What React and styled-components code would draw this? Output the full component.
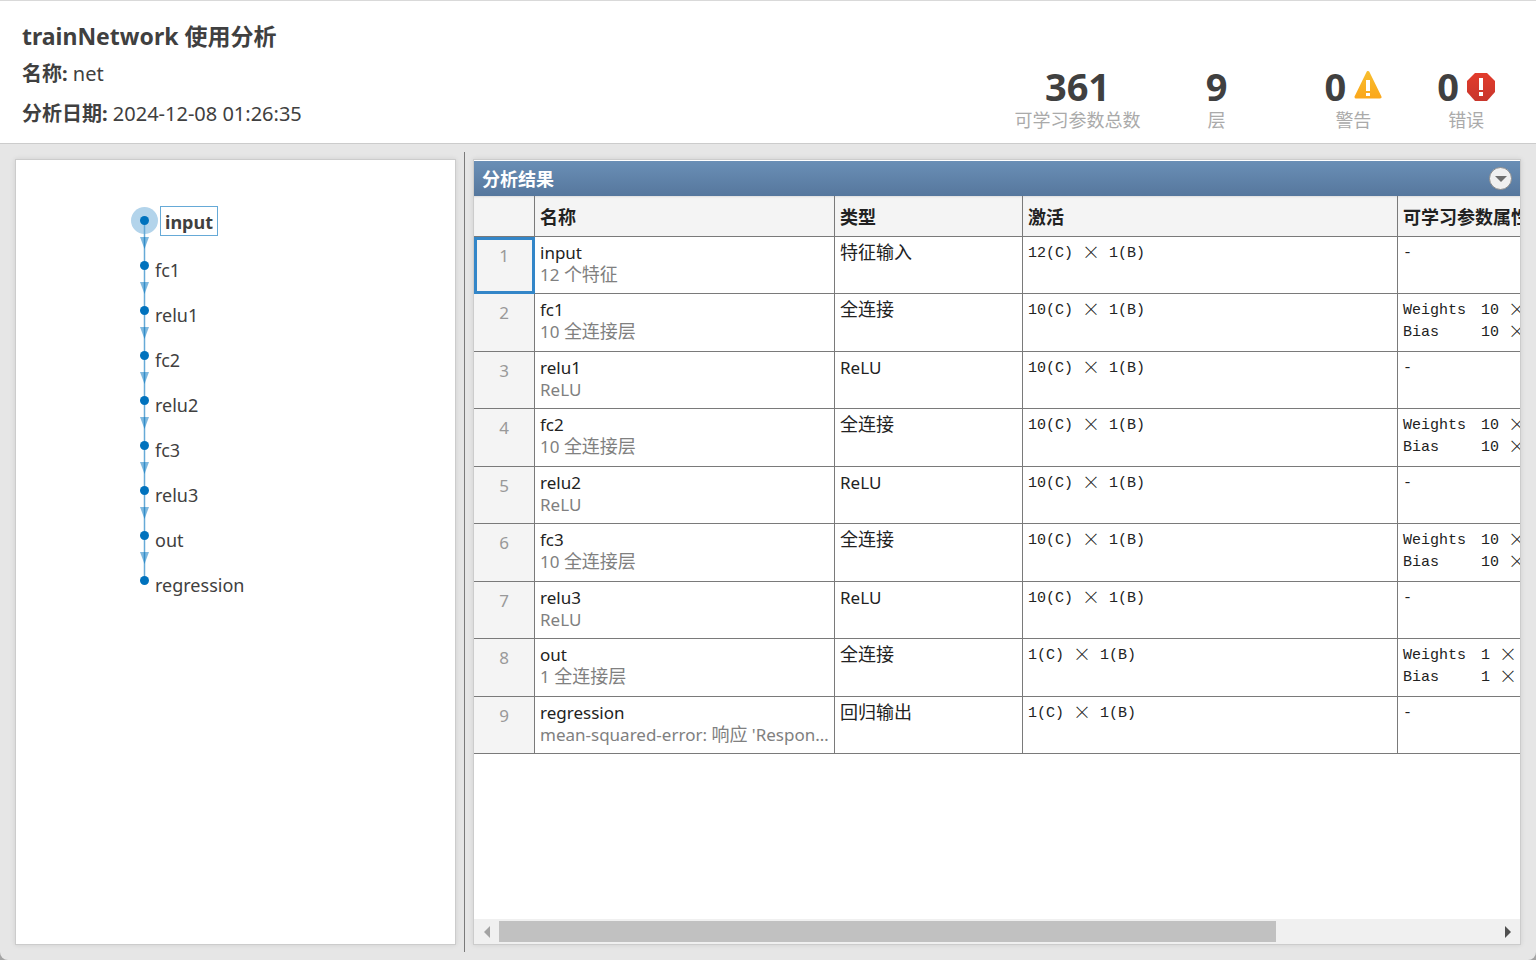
import React from 'react';
import styled, { createGlobalStyle } from 'styled-components';

const GlobalStyle = createGlobalStyle`
  * {
    box-sizing: border-box;
  }
  body {
    margin: 0;
    background-color: #a4a4a4;
    color: #404040;
    font-family: 'Noto Sans', 'Noto Sans CJK SC', sans-serif;
  }
`;

const Page = styled.div`
  display: flex;
  flex-direction: column;
  height: 100vh;
  background-color: #e6e6e6;
  border-radius: 0 0 8px 8px;
  overflow: hidden;
`;

// header
const Header = styled.header`
  display: flex;
  justify-content: space-between;
  align-items: flex-end;
  height: 144px;
  padding: 0 41px 9px 22px;
  background-color: #fff;
  border-top: 1px solid #d9d9d9;
  border-bottom: 1px solid #cccccc;
`;

const Title = styled.h1`
  margin: 0;
  font-size: 23px;
  line-height: 36px;
`;

const MetaLine = styled.p`
  margin: 0;
  font-size: 20px;
  line-height: 40px;
`;

const Stats = styled.div`
  display: flex;
  gap: 55px;
`;

const Stat = styled.div`
  display: flex;
  flex-direction: column;
  align-items: center;
  min-width: 42px;
  margin-right: ${(props) => (props.$last ? '32px' : '0')};
`;

const StatValue = styled.div`
  display: flex;
  align-items: center;
  gap: 8px;
  font-size: 38px;
  font-weight: bold;
  line-height: 40px;
`;

const StatLabel = styled.div`
  font-size: 18px;
  line-height: 28px;
  color: #aaaaaa;
`;

// panels
const Body = styled.main`
  flex: 1;
  display: flex;
  min-height: 0;
  padding: 8px 15px;
`;

const GraphPanel = styled.section`
  flex: 0 0 441px;
  margin: 7px 0;
  padding: 46px 0 0 115px;
  background-color: #fff;
  border: 1px solid #cccccc;
  box-shadow: 0 0 5px rgba(0, 0, 0, 0.1);
`;

const Splitter = styled.div`
  width: 1px;
  margin: 0 8px;
  background-color: #7a7a7a;
`;

const ResultPanel = styled.section`
  flex: 1;
  display: flex;
  flex-direction: column;
  min-width: 0;
  margin: 7px 0;
  background-color: #fff;
  border: 1px solid #cccccc;
  box-shadow: 0 0 5px rgba(0, 0, 0, 0.1);
`;

// layer graph
const LayerList = styled.ul`
  margin: 0;
  padding: 0;
  list-style: none;
`;

const LayerItem = styled.li`
  display: flex;
  align-items: flex-start;
  height: 45px;
`;

const Marker = styled.svg`
  display: block;
  width: 24px;
  height: 45px;
  overflow: visible;
`;

const LayerLabel = styled.span`
  height: 30px;
  margin: ${(props) => (props.$selected ? '0 0 0 5px' : '4px 0 0')};
  padding: ${(props) => (props.$selected ? '0 4px' : '0')};
  border: ${(props) => (props.$selected ? '1px solid #66aad7' : 'none')};
  font-size: 18px;
  font-weight: ${(props) => (props.$selected ? 'bold' : 'normal')};
  line-height: 30px;
`;

// result table
const ResultTitle = styled.div`
  display: flex;
  align-items: center;
  justify-content: space-between;
  height: 35px;
  margin-top: 1px;
  padding: 0 8px;
  background: linear-gradient(#6a8fb6, #56779d);
  color: #fff;
`;

const ResultHeading = styled.h2`
  margin: 0;
  font-size: 18px;
  line-height: 24px;
`;

const MenuButton = styled.button`
  display: flex;
  align-items: center;
  justify-content: center;
  width: 23px;
  height: 23px;
  padding: 0;
  border: 1px solid #8c8c8c;
  border-radius: 50%;
  background-color: #f0f0f0;
  cursor: pointer;
`;

const TableArea = styled.div`
  flex: 1;
  min-height: 0;
  overflow: hidden;
`;

const Table = styled.table`
  width: 1344px;
  table-layout: fixed;
  border-collapse: separate;
  border-spacing: 0;
  color: #222222;
  font-size: 17px;
  line-height: 22px;
`;

const Col = styled.col`
  width: ${(props) => props.$width}px;
`;

const HeadCell = styled.th`
  height: 41px;
  padding: 1px 5px 0;
  border-right: 1px solid #7a7a7a;
  border-bottom: 1px solid #7a7a7a;
  background-color: #f4f4f4;
  box-shadow: inset 0 2px 2px -1px #dddddd;
  font-size: 18px;
  text-align: left;
`;

const Row = styled.tr`
  height: 57px;

  &:nth-child(even) {
    height: 58px;
  }
`;

const Cell = styled.td`
  padding: 5px 5px 0;
  border-right: 1px solid #7a7a7a;
  border-bottom: 1px solid #7a7a7a;
  vertical-align: top;
  white-space: nowrap;
`;

const IndexCell = styled(Cell)`
  padding-top: 8px;
  background-color: #f4f4f4;
  color: #999999;
  text-align: center;
  outline: ${(props) => (props.$selected ? '3px solid #3386c8' : 'none')};
  outline-offset: -3px;
`;

const MonoCell = styled(Cell)`
  padding-top: 6px;
  font-family: 'Liberation Mono', 'Noto Sans CJK SC', monospace;
  font-size: 15px;
`;

const CellLine = styled.div`
  height: 22px;
`;

const Description = styled(CellLine)`
  overflow: hidden;
  text-overflow: ellipsis;
  color: #808080;
`;

const Zh = styled.span`
  font-size: 18px;
  line-height: 18px;
`;

const Times = styled.span`
  font-family: 'Noto Sans CJK SC', sans-serif;
  font-size: 18px;
  font-weight: 300;
  line-height: 1px;
  vertical-align: -2px;
`;

const Params = styled.div`
  display: grid;
  grid-template-columns: max-content max-content;
  grid-auto-rows: 22px;
  column-gap: 15px;
`;

// horizontal scrollbar
const ScrollBar = styled.div`
  display: flex;
  height: 25px;
  padding: 2px 0;
  background-color: #f0f0f0;
`;

const ScrollButton = styled.button`
  display: flex;
  align-items: center;
  justify-content: center;
  width: 25px;
  padding: 0;
  border: none;
  background: none;
`;

const ScrollTrack = styled.div`
  flex: 1;
`;

const ScrollThumb = styled.div`
  width: 78%;
  height: 100%;
  background-color: #c1c1c1;
`;

const layers = [
  { name: 'input', desc: ['12 ', '个特征'], type: '特征输入', size: ['12(C)', '1(B)'] },
  { name: 'fc1', desc: ['10 ', '全连接层'], type: '全连接', size: ['10(C)', '1(B)'], params: [['10', '12'], ['10', '1']] },
  { name: 'relu1', desc: ['ReLU'], type: 'ReLU', size: ['10(C)', '1(B)'] },
  { name: 'fc2', desc: ['10 ', '全连接层'], type: '全连接', size: ['10(C)', '1(B)'], params: [['10', '10'], ['10', '1']] },
  { name: 'relu2', desc: ['ReLU'], type: 'ReLU', size: ['10(C)', '1(B)'] },
  { name: 'fc3', desc: ['10 ', '全连接层'], type: '全连接', size: ['10(C)', '1(B)'], params: [['10', '10'], ['10', '1']] },
  { name: 'relu3', desc: ['ReLU'], type: 'ReLU', size: ['10(C)', '1(B)'] },
  { name: 'out', desc: ['1 ', '全连接层'], type: '全连接', size: ['1(C)', '1(B)'], params: [['1', '10'], ['1', '1']] },
  {
    name: 'regression',
    desc: ['mean-squared-error: ', '响应', " 'Response'"],
    type: '回归输出',
    size: ['1(C)', '1(B)'],
  },
];

const WarningIcon = () => (
  <svg width="28" height="30" viewBox="0 0 28 30">
    <defs>
      <linearGradient id="warn" x1="0" y1="0" x2="0" y2="1">
        <stop offset="0" stopColor="#f7bd2e" />
        <stop offset="1" stopColor="#fba81c" />
      </linearGradient>
    </defs>
    <path d="M14 1.5 L26 26 H2 Z" fill="url(#warn)" stroke="url(#warn)" strokeWidth="3" strokeLinejoin="round" />
    <rect x="12" y="9" width="4" height="11" fill="#fff" />
    <rect x="12" y="22" width="4" height="3" fill="#fff" />
  </svg>
);

const ErrorIcon = () => (
  <svg width="28" height="30" viewBox="0 0 28 30">
    <defs>
      <linearGradient id="err" x1="0" y1="0" x2="0" y2="1">
        <stop offset="0" stopColor="#e23c2c" />
        <stop offset="1" stopColor="#c8362c" />
      </linearGradient>
    </defs>
    <path d="M8 2 H20 L28 10 V21 L20 30 H8 L0 21 V10 Z" fill="url(#err)" />
    <rect x="12" y="7" width="4" height="12" fill="#fff" />
    <rect x="12" y="21" width="4" height="4" fill="#fff" />
  </svg>
);

const Size = ({ left, right }) => (
  <span>
    {left} <Times>×</Times> {right}
  </span>
);

const LayerNode = ({ selected, last }) => (
  <Marker>
    {selected && <circle cx="13.5" cy="14.5" r="13.5" fill="#b3d4eb" />}
    {!last && <path d="M13.5 15 V60" stroke="#66aad7" strokeWidth="1.5" />}
    {!last && <path d="M9 31 H18 L13.5 43 Z" fill="#0072bd" fillOpacity="0.5" />}
    <circle cx="13.5" cy="14.5" r="4.5" fill="#0072bd" />
  </Marker>
);

const App = () => {
  return (
    <>
      <GlobalStyle />
      <Page>
        <Header>
          <div>
            <Title>trainNetwork 使用分析</Title>
            <MetaLine>
              <b>名称:</b> net
            </MetaLine>
            <MetaLine>
              <b>分析日期:</b> 2024-12-08 01:26:35
            </MetaLine>
          </div>
          <Stats>
            <Stat>
              <StatValue>361</StatValue>
              <StatLabel>可学习参数总数</StatLabel>
            </Stat>
            <Stat $last>
              <StatValue>9</StatValue>
              <StatLabel>层</StatLabel>
            </Stat>
            <Stat>
              <StatValue>
                0 <WarningIcon />
              </StatValue>
              <StatLabel>警告</StatLabel>
            </Stat>
            <Stat>
              <StatValue>
                0 <ErrorIcon />
              </StatValue>
              <StatLabel>错误</StatLabel>
            </Stat>
          </Stats>
        </Header>

        <Body>
          <GraphPanel>
            <LayerList>
              {layers.map((layer, i) => (
                <LayerItem key={layer.name}>
                  <LayerNode selected={i === 0} last={i === layers.length - 1} />
                  <LayerLabel $selected={i === 0}>{layer.name}</LayerLabel>
                </LayerItem>
              ))}
            </LayerList>
          </GraphPanel>

          <Splitter />

          <ResultPanel>
            <ResultTitle>
              <ResultHeading>分析结果</ResultHeading>
              <MenuButton aria-label="菜单">
                <svg width="12" height="6" viewBox="0 0 12 6">
                  <path d="M0 0 H12 L6 6 Z" fill="#6e6e6e" />
                </svg>
              </MenuButton>
            </ResultTitle>
            <TableArea>
              <Table>
                <colgroup>
                  <Col $width={61} />
                  <Col $width={300} />
                  <Col $width={188} />
                  <Col $width={375} />
                  <Col $width={420} />
                </colgroup>
                <thead>
                  <tr>
                    <HeadCell />
                    <HeadCell>名称</HeadCell>
                    <HeadCell>类型</HeadCell>
                    <HeadCell>激活</HeadCell>
                    <HeadCell>可学习参数属性</HeadCell>
                  </tr>
                </thead>
                <tbody>
                  {layers.map((layer, i) => (
                    <Row key={layer.name}>
                      <IndexCell $selected={i === 0}>{i + 1}</IndexCell>
                      <Cell>
                        <CellLine>{layer.name}</CellLine>
                        <Description>
                          {layer.desc[0]}
                          <Zh>{layer.desc[1]}</Zh>
                          {layer.desc[2]}
                        </Description>
                      </Cell>
                      <Cell>
                        <CellLine>{layer.type === 'ReLU' ? layer.type : <Zh>{layer.type}</Zh>}</CellLine>
                      </Cell>
                      <MonoCell>
                        <CellLine>
                          <Size left={layer.size[0]} right={layer.size[1]} />
                        </CellLine>
                      </MonoCell>
                      <MonoCell>
                        {layer.params ? (
                          <Params>
                            <span>Weights</span>
                            <Size left={layer.params[0][0]} right={layer.params[0][1]} />
                            <span>Bias</span>
                            <Size left={layer.params[1][0]} right={layer.params[1][1]} />
                          </Params>
                        ) : (
                          '-'
                        )}
                      </MonoCell>
                    </Row>
                  ))}
                </tbody>
              </Table>
            </TableArea>
            <ScrollBar>
              <ScrollButton aria-label="向左滚动">
                <svg width="6" height="12" viewBox="0 0 6 12">
                  <path d="M6 0 V12 L0 6 Z" fill="#a3a3a3" />
                </svg>
              </ScrollButton>
              <ScrollTrack>
                <ScrollThumb />
              </ScrollTrack>
              <ScrollButton aria-label="向右滚动">
                <svg width="6" height="12" viewBox="0 0 6 12">
                  <path d="M0 0 V12 L6 6 Z" fill="#505050" />
                </svg>
              </ScrollButton>
            </ScrollBar>
          </ResultPanel>
        </Body>
      </Page>
    </>
  );
};

export default App;
